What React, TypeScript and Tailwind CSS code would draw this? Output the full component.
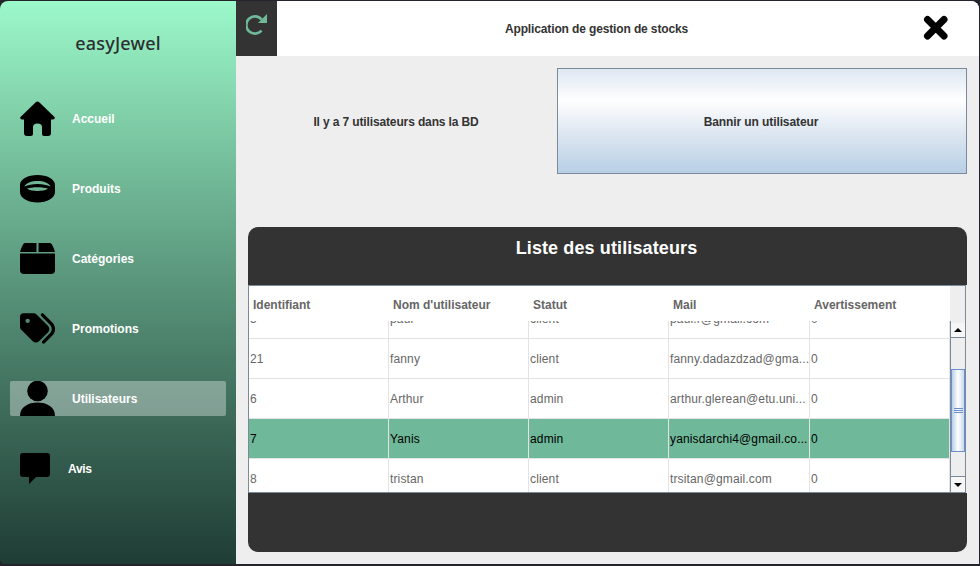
import type { ReactNode } from "react";
import { FaTags } from "react-icons/fa6";

function HomeIcon() {
  return (
    <svg width="35" height="35" viewBox="0 0 35 35" fill="#000">
      <path d="M17.5 0.5 Q18.5 0.5 19.5 1.5 L34.5 16 Q35.5 18 33 18.5 L31 18.5 L31 32 Q31 35 28 35 L24 35 Q22 35 22 33 L22 26 Q22 22.5 17.5 22.5 Q13 22.5 13 26 L13 33 Q13 35 11 35 L7 35 Q4 35 4 32 L4 18.5 L2 18.5 Q-0.5 18 0.5 16 L15.5 1.5 Q16.5 0.5 17.5 0.5Z" />
    </svg>
  );
}

function RingIcon() {
  return (
    <svg width="35" height="28" viewBox="0 0 35 28" fill="#000">
      <path
        fillRule="evenodd"
        d="M0 10 C0 4 8 0 17.5 0 C27 0 35 4 35 10 L35 17 C35 23 27 27.5 17.5 27.5 C8 27.5 0 23 0 17Z M4.5 11.5 C7 4 28 4 30.5 11.5 C24 8 11 8 4.5 11.5Z M7 13.8 C12 11.8 23 11.8 28 13.8 C23 16.8 12 16.8 7 13.8Z"
      />
    </svg>
  );
}

function BoxIcon() {
  return (
    <svg width="35" height="31" viewBox="0 0 35 31" fill="#000">
      <path d="M5 0 L16.5 0 L16.5 9 L0 9 Q1.5 4 3 1.5 Q3.8 0 5 0Z" />
      <path d="M18.5 0 L30 0 Q31.2 0 32 1.5 Q33.5 4 35 9 L18.5 9Z" />
      <path d="M0 10.5 L35 10.5 L35 27 Q35 31 31 31 L4 31 Q0 31 0 27Z" />
    </svg>
  );
}

function UserIcon() {
  return (
    <svg width="35" height="35" viewBox="0 0 35 35" fill="#000">
      <circle cx="17.5" cy="10" r="10.3" />
      <path d="M0 35 C0 26 8 21.5 17.5 21.5 C27 21.5 35 26 35 35Z" />
    </svg>
  );
}

function ChatIcon() {
  return (
    <svg width="30" height="31" viewBox="0 0 30 31" fill="#000">
      <path d="M3 0 L27 0 Q30 0 30 3 L30 21 Q30 24 27 24 L16 24 L9 31 L9 24 L3 24 Q0 24 0 21 L0 3 Q0 0 3 0Z" />
    </svg>
  );
}

function RefreshIcon() {
  return (
    <svg width="22" height="22" viewBox="0 0 22 22" fill="none">
      <path d="M15.5 5.5 A8.6 8.6 0 1 0 15.5 16.5" stroke="#6fb899" strokeWidth="2.6" />
      <path d="M21 0 L21 9 L12 9Z" fill="#6fb899" />
    </svg>
  );
}

function CloseIcon() {
  return (
    <svg width="26" height="26" viewBox="0 0 26 26">
      <path d="M4.5 4.5 L21 21 M21 4.5 L4.5 21" stroke="#000" strokeWidth="7" strokeLinecap="round" />
    </svg>
  );
}

function NavItem({
  icon,
  label,
  active = false,
  textClass = "ml-[17px]",
}: {
  icon: ReactNode;
  label: string;
  active?: boolean;
  textClass?: string;
}) {
  return (
    <div className={`mx-[10px] flex h-[35px] items-center overflow-hidden rounded-[2px] pl-[10px] ${active ? "bg-white/35" : ""}`}>
      <div className="flex w-[35px] shrink-0 items-center">{icon}</div>
      <span className={`${textClass} text-[12px] font-bold text-white`}>{label}</span>
    </div>
  );
}

const users = [
  ["5", "paul", "client", "paul.r@gmail.com", "0"],
  ["21", "fanny", "client", "fanny.dadazdzad@gma...", "0"],
  ["6", "Arthur", "admin", "arthur.glerean@etu.uni...", "0"],
  ["7", "Yanis", "admin", "yanisdarchi4@gmail.co...", "0"],
  ["8", "tristan", "client", "trsitan@gmail.com", "0"],
];

const headers = ["Identifiant", "Nom d'utilisateur", "Statut", "Mail", "Avertissement"];
const colWidths = ["w-[140px]", "w-[140px]", "w-[140px]", "w-[141px]", "w-[140px]"];

function Scrollbar() {
  return (
    <div className="flex w-[15px] shrink-0 flex-col border-l border-[#7a8a99] bg-[#eeeeee] pt-[2px]">
      <div className="flex h-[15px] items-center justify-center border-b border-[#7a8a99] bg-[#f6f6f6]">
        <div className="h-0 w-0 border-x-[4px] border-b-[4px] border-x-transparent border-b-black" />
      </div>
      <div className="h-[31px]" />
      <div className="flex h-[83px] items-center justify-center border border-[#6c8fcf] bg-gradient-to-r from-[#b8cfe5] via-[#ffffff] to-[#c9d9ea]">
        <div className="flex w-[9px] flex-col gap-px">
          <div className="h-px bg-[#6c8fcf]" />
          <div className="h-px bg-[#6c8fcf]" />
          <div className="h-px bg-[#6c8fcf]" />
        </div>
      </div>
      <div className="flex-1" />
      <div className="flex h-[16px] items-center justify-center border-t border-[#7a8a99] bg-[#f6f6f6]">
        <div className="h-0 w-0 border-x-[4px] border-t-[4px] border-x-transparent border-t-black" />
      </div>
    </div>
  );
}

export default function App() {
  return (
    <div className="h-[566px] w-[980px] overflow-hidden bg-[#24242c] pt-px pr-px font-['Liberation_Sans',Arial,sans-serif]">
      <div className="flex h-[563px]">
        <aside className="flex w-[236px] shrink-0 flex-col rounded-tl-[8px] rounded-bl-[5px] bg-gradient-to-b from-[#9cf9ca] to-[#1f3d35]">
          <div className="flex h-[100px] items-center justify-center pb-[16px]">
            <span className="font-['Noto_Sans',sans-serif] text-[18px] font-medium tracking-[0.2px] text-[#2b2f2f]">easyJewel</span>
          </div>
          <div className="flex flex-col gap-[35px]">
            <NavItem icon={<HomeIcon />} label="Accueil" />
            <NavItem icon={<RingIcon />} label="Produits" />
            <NavItem icon={<BoxIcon />} label="Catégories" />
            <NavItem icon={<FaTags size={35} color="#000" />} label="Promotions" />
            <NavItem icon={<UserIcon />} label="Utilisateurs" active />
            <NavItem icon={<ChatIcon />} label="Avis" textClass="ml-[13px] tracking-[-0.3px]" />
          </div>
        </aside>

        <main className="flex min-w-0 flex-1 flex-col rounded-tr-[8px] bg-[#eeeeee]">
          <header className="flex h-[55px] shrink-0 items-center rounded-tr-[8px] bg-white">
            <div className="flex h-full w-[41px] shrink-0 items-center justify-center bg-[#333333] pl-[1px] pb-[8px]">
              <RefreshIcon />
            </div>
            <div className="flex-1 pl-[3px] text-center text-[12px] font-bold tracking-[-0.13px] text-[#333333]">Application de gestion de stocks</div>
            <div className="mr-[30px] ml-[10px] pb-[1px]">
              <CloseIcon />
            </div>
          </header>

          <div className="mt-[12px] flex h-[106px] shrink-0 pr-[12px] pl-[12px]">
            <div className="flex w-[296px] items-center justify-center pt-[2px] text-[12px] font-bold tracking-[-0.13px] text-[#333333]">Il y a 7 utilisateurs dans la BD</div>
            <button
              type="button"
              className="ml-[13px] flex-1 border border-[#7a8a9a] bg-[linear-gradient(to_bottom,#dde7f2_0%,#ffffff_30%,#dfe8f2_60%,#b8cfe5_100%)] pt-[2px] pr-[2px] text-[12px] font-bold tracking-[-0.1px] text-[#333333]"
            >
              Bannir un utilisateur
            </button>
          </div>

          <section className="mt-[53px] ml-[12px] mr-[12px] flex h-[325px] flex-col overflow-hidden rounded-[10px] bg-[#333333]">
            <h2 className="h-[58px] shrink-0 pt-[8px] pr-[2px] text-center text-[18px] font-bold tracking-[0.12px] text-white">Liste des utilisateurs</h2>
            <div className="h-[208px] shrink-0 bg-[#eeeeee] pr-px">
              <div className="flex h-full flex-col border-t border-r border-b border-l border-[#7a8a99] bg-white">
                <div className="flex h-[35px] shrink-0">
                  {headers.map((h, i) => (
                    <div key={h} className={`${colWidths[i]} flex items-center pt-[2px] pl-[4px] text-[12px] font-bold text-[#666666]`}>
                      {h}
                    </div>
                  ))}
                  <div className="flex-1 bg-[#eeeeee]" />
                </div>
                <div className="flex min-h-0 flex-1">
                  <div className="min-h-0 flex-1 overflow-hidden">
                    <div className="mt-[-22px]">
                      {users.map((u) => {
                        const selected = u[0] === "7";
                        return (
                          <div key={u[0]} className="flex h-[40px] border-b border-[#e3e3e3]">
                            {u.map((cell, i) => (
                              <div
                                key={i}
                                className={`${colWidths[i]} flex items-center overflow-hidden border-r border-[#e3e3e3] pl-px text-[12px] tracking-[0.14px] whitespace-nowrap ${
                                  selected ? "bg-[#6fb899] text-black" : "text-[#666666]"
                                }`}
                              >
                                {cell}
                              </div>
                            ))}
                          </div>
                        );
                      })}
                    </div>
                  </div>
                  <Scrollbar />
                </div>
              </div>
            </div>
          </section>
        </main>
      </div>
    </div>
  );
}
